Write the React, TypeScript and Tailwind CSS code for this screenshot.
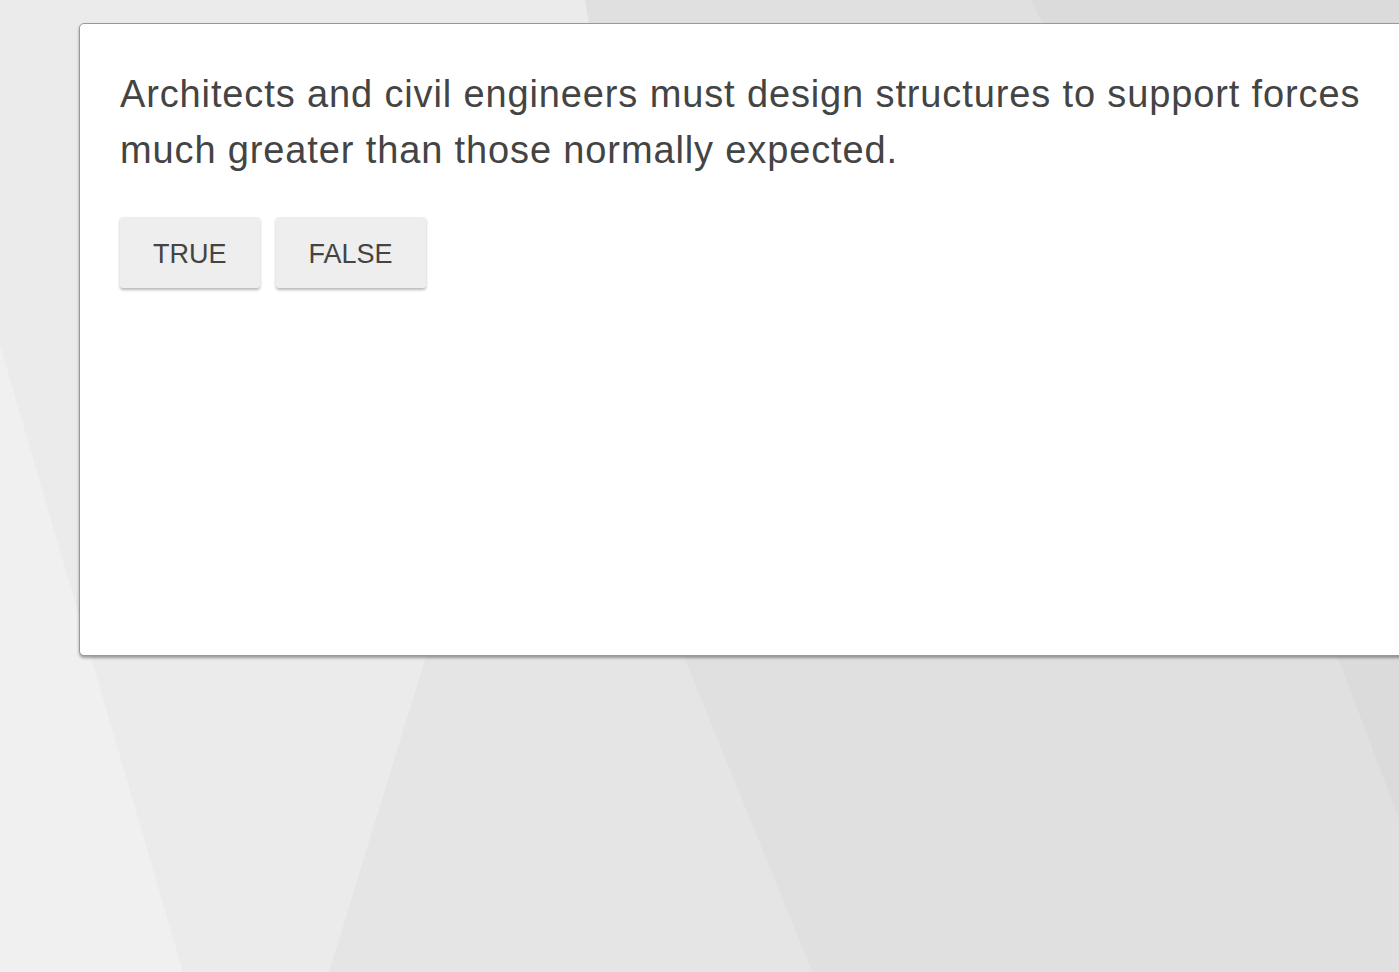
const font = { fontFamily: '"Liberation Sans", Arial, Helvetica, sans-serif' };

function Backdrop() {
  return (
    <svg
      className="absolute inset-0 h-full w-full"
      viewBox="0 0 1399 972"
      preserveAspectRatio="none"
    >
      <rect x="0" y="0" width="1399" height="972" fill="#ebebeb" />
      <polygon points="0,345 183,972 0,972" fill="#f0f0f0" />
      <polygon points="585,0 1031,0 1045,30 590,30" fill="#e0e0e0" />
      <polygon points="1031,0 1399,0 1399,30 1045,30" fill="#dbdbdb" />
      <polygon points="431,640 677,640 812,972 329,972" fill="#e5e5e5" />
      <polygon points="677,640 1331,640 1399,820 1399,972 812,972" fill="#e0e0e0" />
      <polygon points="1331,640 1399,640 1399,820" fill="#dbdbdb" />
    </svg>
  );
}

function AnswerButton({ label }: { label: string }) {
  return (
    <button
      className="h-[71px] rounded-[3px] bg-[#eeeeee] px-[33px] pt-[3px] text-[27px] uppercase text-[#444444] shadow-[0_2px_3px_rgba(0,0,0,0.28)]"
      style={font}
    >
      {label}
    </button>
  );
}

export default function App() {
  return (
    <div className="relative h-[972px] w-[1399px] overflow-hidden">
      <Backdrop />
      <div className="relative pl-[79px] pt-[23px]">
        <div className="h-[633px] w-[1400px] rounded-[5px] border border-[#999999] bg-white pl-[40px] pt-[42px] shadow-[0_2px_3px_rgba(0,0,0,0.35)]">
          <p className="text-[38px] leading-[56px] tracking-[0.87px] text-[#444444]" style={font}>
            Architects and civil engineers must design structures to support forces
            <br />
            much greater than those normally expected.
          </p>
          <div className="mt-[39px] flex gap-[16px]">
            <AnswerButton label="True" />
            <AnswerButton label="False" />
          </div>
        </div>
      </div>
    </div>
  );
}
